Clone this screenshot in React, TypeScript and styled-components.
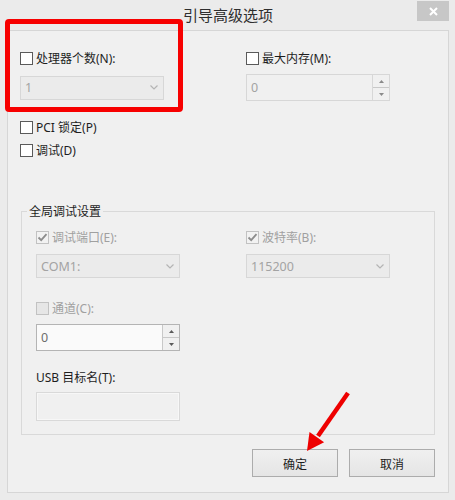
import styled, { createGlobalStyle } from "styled-components";

const GlobalStyle = createGlobalStyle`
  *, *::before, *::after {
    box-sizing: border-box;
  }
  html, body {
    margin: 0;
    padding: 0;
    background: #ebebeb;
  }
  body {
    font-family: "Noto Sans", "Noto Sans CJK SC", sans-serif;
    font-size: 12px;
    color: #1e1e1e;
  }
`;

const Window = styled.div`
  position: relative;
  width: 455px;
  height: 500px;
  display: flex;
  flex-direction: column;
  padding: 0 6px 7px 7px;
  background: #ebebeb;
`;

const TitleBar = styled.div`
  height: 30px;
  display: grid;
  grid-template-columns: 1fr auto 1fr;
  align-items: center;
`;

const Title = styled.div`
  grid-column: 2;
  font-family: "Noto Sans CJK SC", sans-serif;
  font-size: 15px;
  line-height: 30px;
  color: #2e2e2e;
`;

const CloseButton = styled.button`
  grid-column: 3;
  justify-self: end;
  align-self: start;
  width: 32px;
  height: 20px;
  margin-top: 1px;
  padding: 0;
  border: 0;
  background: #c7c7c7;
  display: flex;
  align-items: center;
  justify-content: center;
`;

const Client = styled.div`
  flex: 1;
  display: flex;
  flex-direction: column;
  border: 1px solid #d6d6d6;
  background: #f0f0f0;
  padding: 19px 12px 0;
`;

const Columns = styled.div<{ $first: number; $gap: number; $control: number }>`
  display: grid;
  grid-template-columns: ${(p) => p.$first}px 144px;
  grid-template-rows: 17px ${(p) => p.$control}px;
  row-gap: ${(p) => p.$gap}px;
  align-items: center;
`;

const CheckRow = styled.label<{ $top?: number }>`
  display: flex;
  align-items: center;
  gap: 3px;
  height: 17px;
  margin-top: ${(p) => p.$top ?? 0}px;
`;

const Text = styled.span<{ $disabled?: boolean }>`
  line-height: 17px;
  white-space: nowrap;
  color: ${(p) => (p.$disabled ? "#a0a0a0" : "#1e1e1e")};
`;

const Box = styled.span<{ $disabled?: boolean }>`
  width: 13px;
  height: 13px;
  flex: none;
  display: flex;
  align-items: center;
  justify-content: center;
  border: 1px solid ${(p) => (p.$disabled ? "#c2c2c2" : "#5a5a5a")};
  background: ${(p) => (p.$disabled ? "#e6e6e6" : "#ffffff")};
`;

const CheckedBox = styled(Box)`
  background: #f2f2f2;
`;

const Dropdown = styled.div`
  width: 144px;
  height: 24px;
  display: flex;
  align-items: center;
  justify-content: space-between;
  padding: 0 5px 0 4px;
  border: 1px solid #d7d7d7;
  background: #ebebeb;
  color: #a3a3a3;
  font-size: 12.5px;
`;

const Spin = styled.div<{ $enabled?: boolean }>`
  width: 144px;
  height: 27px;
  display: flex;
  border: 1px solid ${(p) => (p.$enabled ? "#b4b4b4" : "#d7d7d7")};
  background: ${(p) => (p.$enabled ? "#fafafa" : "#f0f0f0")};
  color: ${(p) => (p.$enabled ? "#6d6d6d" : "#a3a3a3")};
  font-size: 12.5px;
`;

const SpinValue = styled.div`
  flex: 1;
  display: flex;
  align-items: center;
  padding-left: 4px;
`;

const SpinButtons = styled.div<{ $enabled?: boolean }>`
  width: 17px;
  display: flex;
  flex-direction: column;
  border-left: 1px solid ${(p) => (p.$enabled ? "#c8c8c8" : "#d7d7d7")};
`;

const SpinButton = styled.div<{ $enabled?: boolean }>`
  flex: 1;
  display: flex;
  align-items: center;
  justify-content: center;
  background: ${(p) => (p.$enabled ? "#f0f0f0" : "#f0f0f0")};
  & + & {
    border-top: 1px solid ${(p) => (p.$enabled ? "#c8c8c8" : "#d7d7d7")};
  }
`;

const GroupBox = styled.fieldset`
  margin: 43px 1px 0;
  padding: 0;
  min-width: 0;
  border: 1px solid #d9d9d9;
`;

const GroupTitle = styled.legend`
  margin-left: 5px;
  padding: 0 2px;
  line-height: 18px;
  font-family: "Noto Sans CJK SC", sans-serif;
  color: #1e1e1e;
`;

const GroupBody = styled.div`
  display: flex;
  flex-direction: column;
  align-items: flex-start;
  padding: 9px 14px 13px;
`;

const Spaced = styled.div<{ $top: number }>`
  margin-top: ${(p) => p.$top}px;
`;

const TextBox = styled.div`
  width: 144px;
  height: 29px;
  border: 1px solid #d9d9d9;
  box-shadow: inset 0 0 0 1px #f7f7f7;
  background: #f0f0f0;
`;

const ButtonRow = styled.div`
  display: flex;
  justify-content: flex-end;
  gap: 11px;
  margin: 14px 1px 0 0;
`;

const DialogButton = styled.button`
  width: 86px;
  height: 28px;
  padding: 0;
  border: 1px solid #acacac;
  background: linear-gradient(#f0f0f0, #e5e5e5);
  font-family: "Noto Sans CJK SC", sans-serif;
  font-size: 12px;
  color: #1e1e1e;
`;

/* red callouts drawn on top of the dialog */
const Highlight = styled.div`
  position: absolute;
  left: 5px;
  top: 19px;
  width: 178px;
  height: 93px;
  border: 5px solid #f70000;
  border-radius: 4px;
  pointer-events: none;
`;

const Pointer = styled.svg`
  position: absolute;
  left: 300px;
  top: 386px;
  pointer-events: none;
`;

const Chevron = () => (
  <svg width="8" height="5" viewBox="0 0 8 5">
    <polyline points="0.5,0.5 4,4 7.5,0.5" fill="none" stroke="#b4b4b4" strokeWidth="1.2" />
  </svg>
);

const Tick = () => (
  <svg width="11" height="11" viewBox="0 0 11 11">
    <polyline points="1.5,5.5 4.2,8.2 9.5,2.2" fill="none" stroke="#8c8c8c" strokeWidth="1.8" />
  </svg>
);

const Arrow = ({ up, color }: { up?: boolean; color: string }) => (
  <svg width="5" height="3" viewBox="0 0 5 3">
    <polygon points={up ? "2.5,0 5,3 0,3" : "0,0 5,0 2.5,3"} fill={color} />
  </svg>
);

const Check = ({ label, disabled, checked, top }: { label: string; disabled?: boolean; checked?: boolean; top?: number }) => (
  <CheckRow $top={top}>
    {checked ? (
      <CheckedBox $disabled>
        <Tick />
      </CheckedBox>
    ) : (
      <Box $disabled={disabled} />
    )}
    <Text $disabled={disabled}>{label}</Text>
  </CheckRow>
);

const Select = ({ value }: { value: string }) => (
  <Dropdown>
    <span>{value}</span>
    <Chevron />
  </Dropdown>
);

const Spinner = ({ value, enabled }: { value: string; enabled?: boolean }) => {
  const arrow = enabled ? "#5a5a5a" : "#8a8a8a";
  return (
    <Spin $enabled={enabled}>
      <SpinValue>{value}</SpinValue>
      <SpinButtons $enabled={enabled}>
        <SpinButton $enabled={enabled}>
          <Arrow up color={arrow} />
        </SpinButton>
        <SpinButton $enabled={enabled}>
          <Arrow color={arrow} />
        </SpinButton>
      </SpinButtons>
    </Spin>
  );
};

export default function App() {
  return (
    <>
      <GlobalStyle />
      <Window>
        <TitleBar>
          <Title>引导高级选项</Title>
          <CloseButton aria-label="关闭">
            <svg width="9" height="9" viewBox="0 0 9 9">
              <path d="M1 1 L8 8 M8 1 L1 8" stroke="#fff" strokeWidth="2" />
            </svg>
          </CloseButton>
        </TitleBar>

        <Client>
          <Columns $first={226} $gap={7} $control={27}>
            <Check label="处理器个数(N):" />
            <Check label="最大内存(M):" />
            <Select value="1" />
            <Spinner value="0" />
          </Columns>

          <Check label="PCI 锁定(P)" top={18} />
          <Check label="调试(D)" top={6} />

          <GroupBox>
            <GroupTitle>全局调试设置</GroupTitle>
            <GroupBody>
              <Columns $first={210} $gap={8} $control={24}>
                <Check label="调试端口(E):" disabled checked />
                <Check label="波特率(B):" disabled checked />
                <Select value="COM1:" />
                <Select value="115200" />
              </Columns>

              <Check label="通道(C):" disabled top={22} />
              <Spaced $top={7}>
                <Spinner value="0" enabled />
              </Spaced>

              <Spaced $top={18}>
                <Text>USB 目标名(T):</Text>
              </Spaced>
              <Spaced $top={6}>
                <TextBox />
              </Spaced>
            </GroupBody>
          </GroupBox>

          <ButtonRow>
            <DialogButton>确定</DialogButton>
            <DialogButton>取消</DialogButton>
          </ButtonRow>
        </Client>

        <Highlight />
        <Pointer width="56" height="72" viewBox="0 0 56 72">
          <line x1="48" y1="7" x2="18" y2="50" stroke="#ee0000" strokeWidth="4.5" />
          <polygon points="7,65 9.5,45.9 24.1,56.3" fill="#ee0000" />
        </Pointer>
      </Window>
    </>
  );
}
